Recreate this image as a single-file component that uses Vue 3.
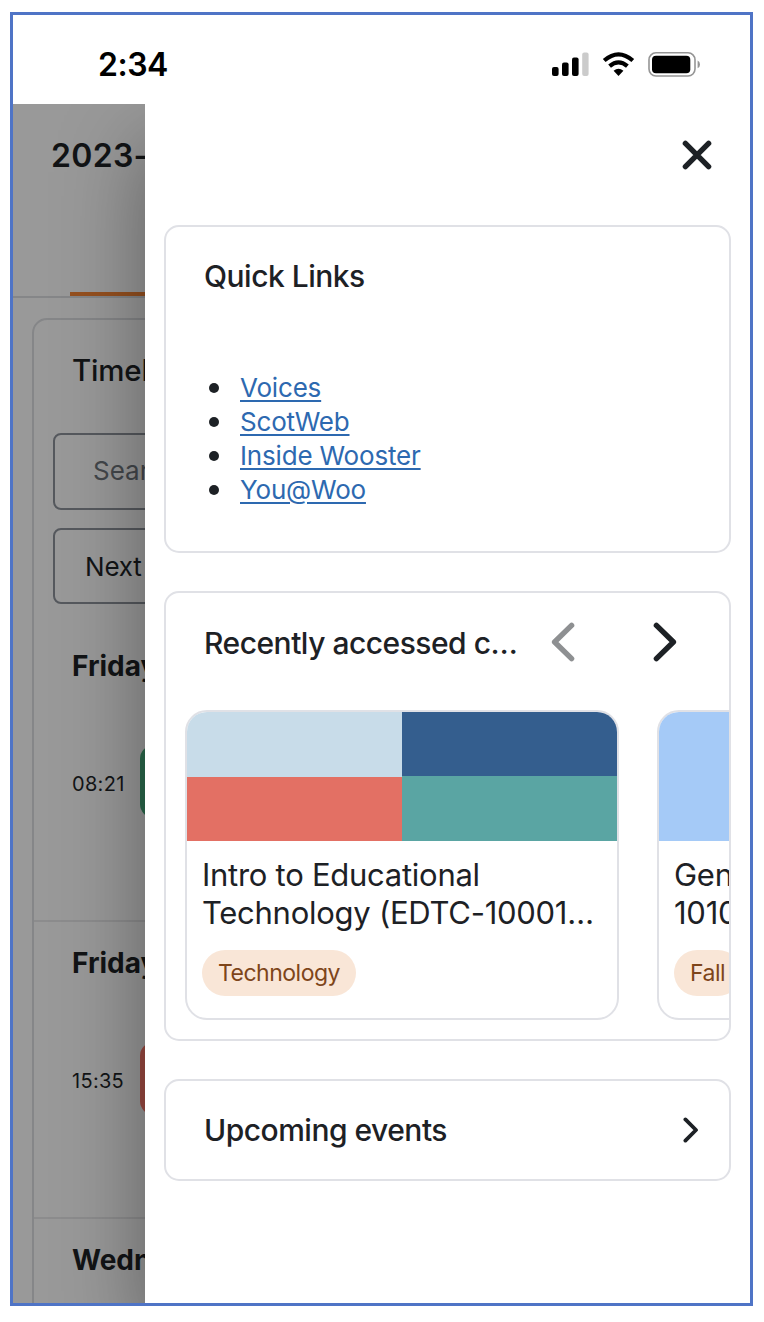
<script setup>
const links = ['Voices', 'ScotWeb', 'Inside Wooster', 'You@Woo'];

const events = [
  { day: 'Friday', time: '08:21', type: 'green' },
  { day: 'Friday', time: '15:35', type: 'red' },
  { day: 'Wedn', time: '', type: '' }
];

const courses = [
  { id: 1, lines: ['Intro to Educational', 'Technology (EDTC-10001…'], tag: 'Technology', cover: 'mosaic' },
  { id: 2, lines: ['Gen', '1010'], tag: 'Fall', cover: 'plain' }
];
</script>

<template>
  <div class="phone">
    <header class="status-bar">
      <span class="clock">2:34</span>
      <svg class="status-icons" width="150" height="26" viewBox="0 0 150 26">
        <rect x="2" y="15" width="6.6" height="9" rx="2" />
        <rect x="12" y="10.5" width="6.6" height="13.5" rx="2" />
        <rect x="22" y="5.5" width="6.6" height="18.5" rx="2" />
        <rect x="32.2" y="0.5" width="6.4" height="23.5" rx="2" fill="#cbcbcb" />
        <g fill="none" stroke="#000" stroke-width="4.2">
          <path d="M54.2 8.5Q68.5 -3.8 82.8 8.5" />
          <path d="M59.6 14.2Q68.5 6.6 77.4 14.2" />
        </g>
        <path d="M63.6 18.8Q68.5 14.6 73.4 18.8L68.5 24Z" />
        <rect x="99" y="0.8" width="46" height="23.2" rx="7" fill="none" stroke="#959595" stroke-width="1.6" />
        <rect x="102" y="3.8" width="38.3" height="17.4" rx="4" />
        <path d="M147.6 8.6Q150 9.6 150 12.4T147.6 16.2Z" fill="#959595" />
      </svg>
    </header>

    <div class="screen">
      <main class="page">
        <div class="page-header">
          <span class="year">2023-</span>
          <span class="active-tab"></span>
        </div>
        <section class="timeline">
          <h2 class="timeline-title">Timel</h2>
          <div class="field search">Sear</div>
          <div class="field filter">Next</div>
          <div v-for="(event, i) in events" :key="i" class="event">
            <h3 class="event-day">{{ event.day }}</h3>
            <div v-if="event.time" class="event-row">
              <span class="event-time">{{ event.time }}</span>
              <span class="event-icon" :class="event.type"></span>
            </div>
          </div>
        </section>
      </main>

      <aside class="drawer">
        <div class="drawer-header">
          <button class="icon-btn" aria-label="Close">
            <svg width="30" height="30" viewBox="0 0 30 30">
              <path d="M3.4 3.4L26.6 26.6M26.6 3.4L3.4 26.6" class="stroke-dark" stroke-width="5.4" />
            </svg>
          </button>
        </div>

        <section class="block quick-links">
          <h2 class="block-title">Quick Links</h2>
          <ul class="links">
            <li v-for="link in links" :key="link"><a href="#">{{ link }}</a></li>
          </ul>
        </section>

        <section class="block recent">
          <div class="recent-header">
            <h2 class="block-title recent-title">Recently accessed c…</h2>
            <button class="icon-btn prev" aria-label="Previous">
              <svg width="24" height="40" viewBox="0 0 24 40">
                <path d="M20.6 3.4L3.6 20L20.6 36.6" class="stroke-muted" stroke-width="5.4" />
              </svg>
            </button>
            <button class="icon-btn next" aria-label="Next">
              <svg width="24" height="40" viewBox="0 0 24 40">
                <path d="M3.4 3.4L20.4 20L3.4 36.6" class="stroke-dark" stroke-width="5.4" />
              </svg>
            </button>
          </div>
          <div class="courses">
            <article v-for="course in courses" :key="course.id" class="course">
              <div class="cover" :class="course.cover"></div>
              <div class="course-body">
                <p class="course-name">
                  <span v-for="line in course.lines" :key="line">{{ line }}</span>
                </p>
                <span class="tag">{{ course.tag }}</span>
              </div>
            </article>
          </div>
        </section>

        <section class="block upcoming">
          <h2 class="block-title">Upcoming events</h2>
          <svg width="16" height="26" viewBox="0 0 16 26">
            <path d="M2.4 2.4L13 13L2.4 23.6" class="stroke-dark" stroke-width="3.8" />
          </svg>
        </section>
      </aside>
    </div>
  </div>
</template>

<style>
body {
  background: #fff;
}
</style>

<style scoped>
* {
  box-sizing: border-box;
}

.phone {
  width: 743px;
  height: 1294px;
  margin: 12px 0 0 10px;
  border: 3px solid #4f74c6;
  display: flex;
  flex-direction: column;
  overflow: hidden;
  font-family: Inter, "Liberation Sans", sans-serif;
  color: #1d2125;
}

h2,
h3,
p,
ul {
  margin: 0;
  padding: 0;
}

.status-bar {
  height: 89px;
  flex-shrink: 0;
  display: flex;
  justify-content: space-between;
  align-items: center;
  padding: 10px 50px 0 85px;
}

.clock {
  font-size: 32px;
  font-weight: 600;
  letter-spacing: -0.5px;
  color: #000;
}

.screen {
  flex: 1;
  min-height: 0;
  display: flex;
  overflow: hidden;
}

/* Dimmed page behind the drawer */
.page {
  width: 132px;
  flex-shrink: 0;
  background: #999;
  color: #121416;
  overflow: hidden;
  white-space: nowrap;
}

.page-header {
  height: 194px;
  border-bottom: 2px solid #858688;
  display: flex;
  flex-direction: column;
  justify-content: space-between;
  padding: 32px 0 0 38px;
}

.year {
  font-size: 32px;
  line-height: 40px;
  font-weight: 600;
  letter-spacing: 0.3px;
}

.active-tab {
  height: 4px;
  margin-left: 19px;
  background: #95501f;
}

.timeline {
  width: 200px;
  height: 1020px;
  margin: 20px 0 0 19px;
  border: 2px solid #858688;
  border-radius: 15px;
}

.timeline-title {
  margin: 30px 0 0 38px;
  font-size: 29.5px;
  line-height: 40px;
  font-weight: 500;
  letter-spacing: -0.2px;
}

.field {
  margin-left: 19px;
  border: 2px solid #56595e;
  border-radius: 8px;
  display: flex;
  align-items: center;
  font-size: 26px;
}

.search {
  height: 77px;
  margin-top: 43px;
  padding: 0 0 2px 38px;
  color: #43474b;
}

.filter {
  height: 76px;
  margin-top: 18px;
  padding-left: 30px;
  letter-spacing: -0.2px;
}

.event {
  height: 297px;
  padding: 21px 0 0 38px;
  border-bottom: 2px solid #8c8c8d;
}

.field + .event {
  height: 318px;
  padding-top: 42px;
}

.event-day {
  font-size: 28px;
  line-height: 40px;
  font-weight: 700;
}

.event-row {
  display: flex;
  align-items: center;
  margin-top: 61px;
  height: 74px;
}

.event-time {
  width: 68px;
  font-size: 20px;
  letter-spacing: 0.3px;
}

.event-icon {
  width: 73px;
  height: 73px;
  margin-bottom: 5px;
  border-radius: 14px;
}

.green {
  background: #2b6a4c;
}

.red {
  background: #9c4a41;
}

.drawer {
  flex: 1;
  min-width: 0;
  position: relative;
  background: #fff;
  box-shadow: 0 40px 80px rgba(0, 0, 0, 0.38);
  padding: 0 19px;
}

.drawer-header {
  height: 121px;
  display: flex;
  justify-content: flex-end;
  padding: 36px 19px 0 0;
}

.icon-btn {
  display: flex;
  align-items: flex-start;
  padding: 0;
  border: none;
  background: transparent;
  cursor: pointer;
}

.stroke-dark,
.stroke-muted {
  fill: none;
  stroke: #1d2125;
  stroke-linecap: round;
  stroke-linejoin: round;
}

.stroke-muted {
  stroke: #8e9092;
}

.block {
  border: 2px solid #e0e1e6;
  border-radius: 15px;
  margin-bottom: 38px;
  overflow: hidden;
}

.block-title {
  font-size: 30px;
  line-height: 40px;
  font-weight: 500;
  letter-spacing: -0.5px;
  white-space: nowrap;
}

.quick-links {
  height: 328px;
  padding: 29px 38px 0;
}

.links {
  margin-top: 74px;
  list-style: none;
}

.links li {
  display: flex;
  align-items: center;
  height: 34px;
  font-size: 26px;
  letter-spacing: -0.18px;
}

.links li::before {
  content: "";
  width: 10px;
  height: 10px;
  margin: 1px 21px 0 5px;
  border-radius: 50%;
  background: #1d2125;
}

.links a {
  color: #2d69b0;
  text-decoration-thickness: 2px;
  text-underline-offset: 3px;
}

.recent {
  height: 450px;
}

.recent-header {
  display: flex;
  height: 117px;
  padding: 29px 0 0 38px;
}

.recent-title {
  width: 347px;
  padding-top: 1px;
}

.next {
  margin-left: 78px;
}

.courses {
  display: flex;
  gap: 38px;
  padding-left: 19px;
}

.course {
  width: 434px;
  height: 310px;
  flex-shrink: 0;
  border: 2px solid #e0e1e6;
  border-radius: 22px;
  overflow: hidden;
}

.cover {
  height: 129px;
}

.mosaic {
  background: conic-gradient(#345e8e 0 25%, #5aa5a3 0 50%, #e37064 0 75%, #c8dce9 0);
}

.plain {
  background: #a5caf7;
}

.course-body {
  padding: 15px;
}

.course-name {
  display: flex;
  flex-direction: column;
  font-size: 31px;
  line-height: 38px;
  letter-spacing: -0.27px;
  white-space: nowrap;
}

.tag {
  display: inline-block;
  margin-top: 18px;
  padding: 0 16px;
  border-radius: 23px;
  background: #f9e6d7;
  color: #7e451a;
  font-size: 23px;
  line-height: 46px;
  letter-spacing: -0.5px;
}

.upcoming {
  height: 102px;
  display: flex;
  align-items: center;
  justify-content: space-between;
  padding: 0 30px 0 38px;
}
</style>
